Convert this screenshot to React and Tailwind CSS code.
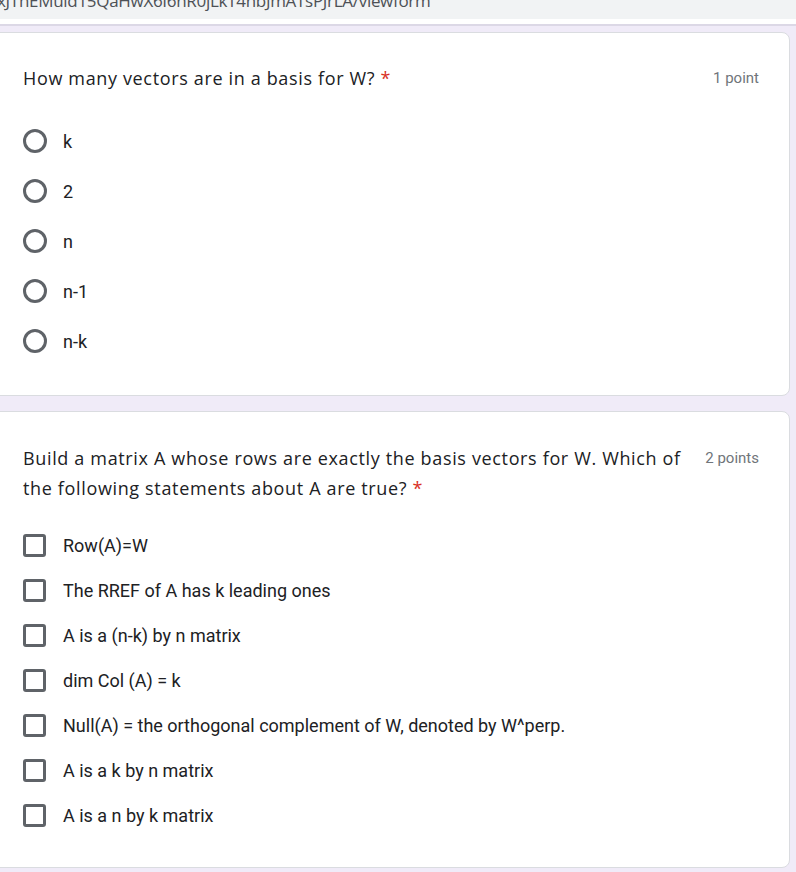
import React from "react";

const radioOptions = ["k", "2", "n", "n-1", "n-k"];

const checkOptions = [
  "Row(A)=W",
  "The RREF of A has k leading ones",
  "A is a (n-k) by n matrix",
  "dim Col (A) = k",
  "Null(A) = the orthogonal complement of W, denoted by W^perp.",
  "A is a k by n matrix",
  "A is a n by k matrix",
];

const titleFont = { fontFamily: '"Open Sans", "Liberation Sans", sans-serif' };
const bodyFont = { fontFamily: 'Roboto, "Liberation Sans", sans-serif' };

function Radio({ label }) {
  return (
    <div className="flex h-[50px] items-center">
      <div className="ml-[22px] h-[24px] w-[24px] shrink-0 rounded-full border-[3px] border-[#5f6368]" />
      <span className="ml-[16px] text-[18px] text-[#202124]" style={bodyFont}>
        {label}
      </span>
    </div>
  );
}

function Checkbox({ label }) {
  return (
    <div className="flex h-[45px] items-center">
      <div className="ml-[22px] h-[23px] w-[23px] shrink-0 rounded-[3px] border-[3px] border-[#5f6368]" />
      <span className="ml-[17px] text-[18px] text-[#202124]" style={bodyFont}>
        {label}
      </span>
    </div>
  );
}

export default function App() {
  return (
    <div className="min-h-[872px] w-[796px] overflow-hidden bg-[#f0ebf8]">
      {/* browser address bar remnant */}
      <div className="h-[19px] overflow-hidden bg-[#f1f3f4]">
        <div
          className="-ml-[3px] -mt-[12px] whitespace-nowrap text-[17px] leading-[26px] tracking-[-0.3px] text-[#4d5156]"
          style={titleFont}
        >
          xJThEMuld15QaHwX6I6nR0jLkT4nbJmATsPJrLA/viewform
        </div>
      </div>
      <div className="h-[5px] bg-white" />
      <div className="h-[2px] bg-[#dcd8e6]" />

      <div className="pt-[6px]">
        {/* question 1 */}
        <div className="-ml-[10px] mr-[6px] rounded-lg border border-[#dadce0] bg-white pb-[29px] pl-[10px] pt-[33px]">
          <div className="flex items-center justify-between pr-[30px]">
            <div
              className="pl-[22px] text-[18px] leading-[24px] tracking-[0.65px] text-[#202124]"
              style={titleFont}
            >
              How many vectors are in a basis for W? <span className="text-[#d93025]">*</span>
            </div>
            <div className="text-[15px] text-[#70757a]" style={bodyFont}>
              1 point
            </div>
          </div>
          <div className="mt-[26px]">
            {radioOptions.map((o) => (
              <Radio key={o} label={o} />
            ))}
          </div>
        </div>

        {/* question 2 */}
        <div className="-ml-[10px] mr-[6px] mt-[15px] rounded-lg border border-[#dadce0] bg-white pb-[29px] pl-[10px] pt-[31px]">
          <div className="flex items-start justify-between pr-[30px]">
            <div
              className="w-[694px] pl-[22px] text-[18px] leading-[30px] tracking-[0.65px] text-[#202124]"
              style={titleFont}
            >
              Build a matrix A whose rows are exactly the basis vectors for W. Which of the following
              statements about A are true? <span className="text-[#d93025]">*</span>
            </div>
            <div className="pt-[4px] text-[15px] text-[#70757a]" style={bodyFont}>
              2 points
            </div>
          </div>
          <div className="mt-[20px]">
            {checkOptions.map((o) => (
              <Checkbox key={o} label={o} />
            ))}
          </div>
        </div>
      </div>
    </div>
  );
}
